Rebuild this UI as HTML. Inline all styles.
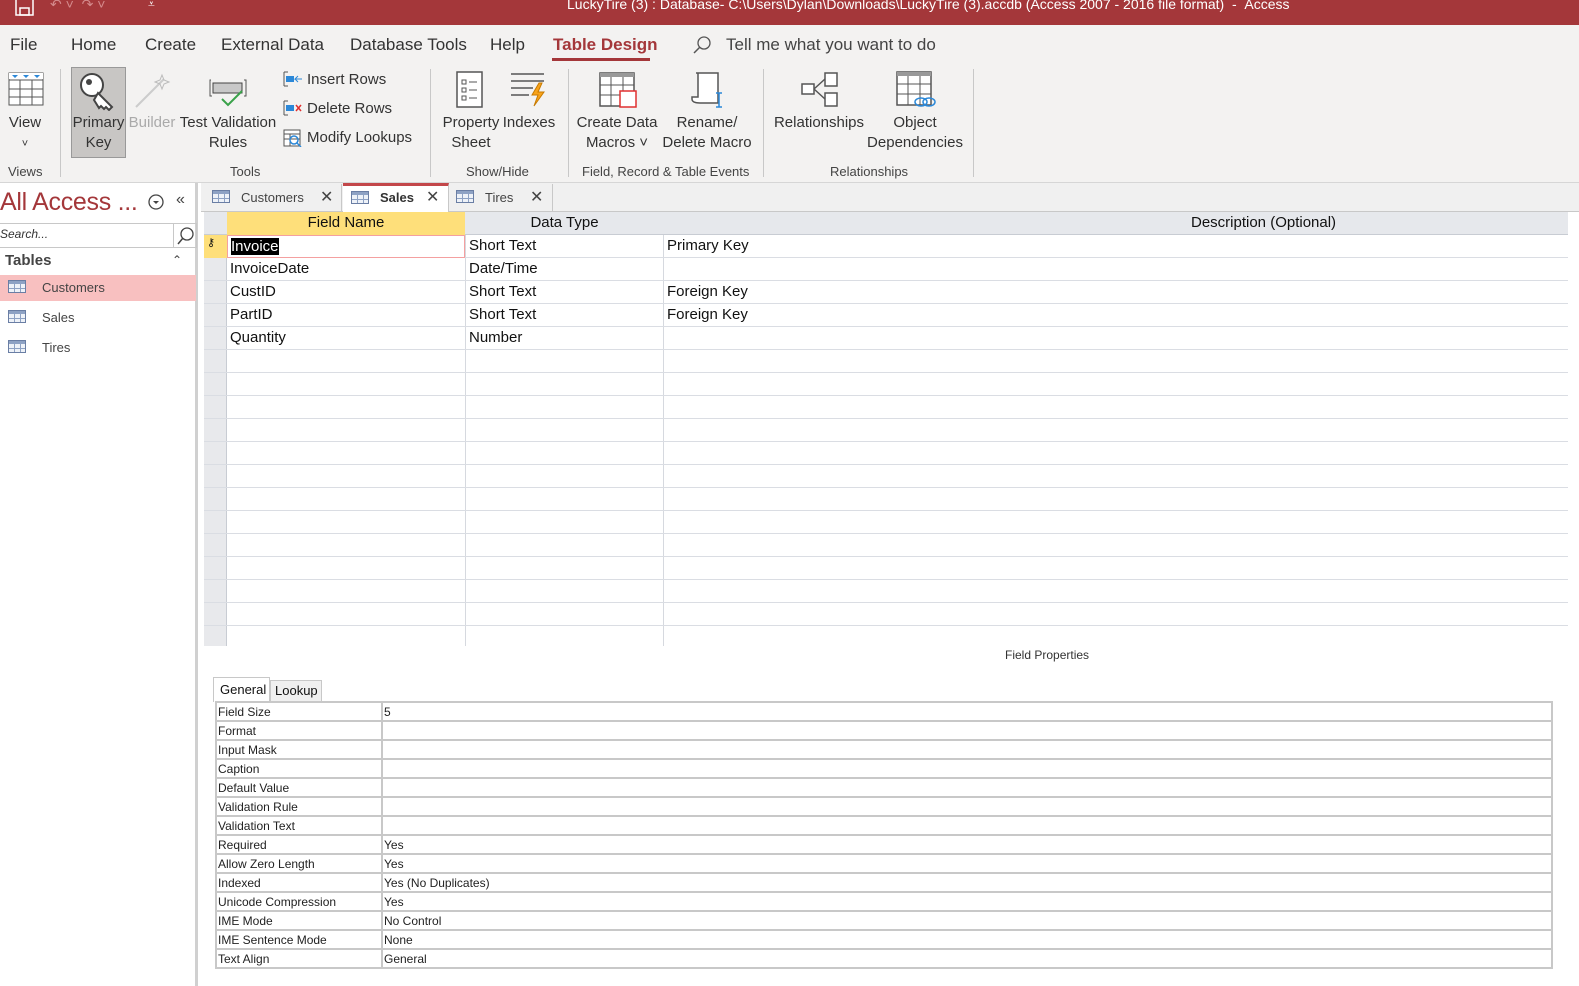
<!DOCTYPE html>
<html><head><meta charset="utf-8"><style>
*{box-sizing:border-box;margin:0;padding:0}
body{width:1579px;height:986px;overflow:hidden;background:#fff;font-family:"Segoe UI","Liberation Sans",sans-serif;position:relative;color:#333}
.abs{position:absolute}
#title{left:0;top:0;width:1579px;height:25px;background:#a4373a;color:#fff;font-size:14px}
#tabs{left:0;top:25px;width:1579px;height:38px;background:#f3f2f1;font-size:17px;color:#333}
#tabs span{position:absolute;top:10px}
#ribbon{left:0;top:63px;width:1579px;height:120px;background:#f3f2f1;border-bottom:1px solid #d6d6d6;font-size:15px;color:#333}
.lbl{position:absolute;text-align:center;line-height:20px}
.grp{position:absolute;top:101px;font-size:13px;color:#444}
.sep{position:absolute;top:6px;width:1px;height:108px;background:#c8c8c8}
#nav{left:0;top:183px;width:198px;height:803px;background:#fff;border-right:3px solid #d0d0d0}
.tabl{position:absolute;font-size:13px;color:#444}
.gicon{display:inline-block;width:18px;height:13px;border:1px solid #6a7ea4;background:linear-gradient(#8ea2c4 0 3px,#eef2f8 3px);background-size:100% 100%;position:absolute}
.gicon::after{content:"";position:absolute;inset:3px 0 0 0;background:linear-gradient(90deg,transparent 5px,#8ea2c4 5px 6px,transparent 6px 11px,#8ea2c4 11px 12px,transparent 12px),linear-gradient(transparent 4px,#8ea2c4 4px 5px,transparent 5px)}
#grid{left:204px;top:212px;width:1364px;height:434px;font-size:15px;color:#111}
.row{position:absolute;left:0;width:1364px;height:23px;border-bottom:1px solid #dadde3}
.cell{position:absolute;top:0;height:23px;line-height:22px;padding-left:3px}
#props td{border:2px solid #c8c8c8;font-size:12px;height:19px;padding:0 1px;color:#222;line-height:14px}
</style></head><body>
<div id="title" class="abs">
<svg class="abs" style="left:14px;top:0" width="22" height="18"><rect x="2" y="-2" width="17" height="17" fill="none" stroke="#fff" stroke-width="1.5"/><rect x="6" y="8" width="9" height="7" fill="none" stroke="#fff" stroke-width="1.5"/></svg>
<span class="abs" style="left:50px;top:-4px;color:#d48a8c">↶ ˅ &nbsp;↷ ˅</span>
<span class="abs" style="left:148px;top:-3px;font-size:12px">⩡</span>
<span class="abs" style="left:567px;top:-4px">LuckyTire (3) : Database- C:\Users\Dylan\Downloads\LuckyTire (3).accdb (Access 2007 - 2016 file format)&nbsp; - &nbsp;Access</span>
</div>
<div id="tabs" class="abs">
<span style="left:10px">File</span><span style="left:71px">Home</span><span style="left:145px">Create</span><span style="left:221px">External Data</span><span style="left:350px">Database Tools</span><span style="left:490px">Help</span>
<span style="left:553px;color:#a4373a;font-weight:bold">Table Design</span>
<div class="abs" style="left:552px;top:33px;width:98px;height:3px;background:#a4373a"></div>
<svg class="abs" style="left:692px;top:10px" width="20" height="20"><circle cx="12" cy="8" r="6" fill="none" stroke="#555" stroke-width="1.3"/><line x1="8" y1="12" x2="2" y2="18" stroke="#555" stroke-width="1.5"/></svg>
<span style="left:726px;color:#444">Tell me what you want to do</span>
</div>
<div id="ribbon" class="abs">
<svg class="abs" style="left:8px;top:8px" width="36" height="36"><rect x="1" y="2" width="34" height="32" fill="#fff" stroke="#555"/><rect x="1" y="2" width="34" height="6" fill="#fff"/><path d="M4 4h6l-3 3zM15 4h6l-3 3zM26 4h6l-3 3z" fill="#2b88d8"/><path d="M1 9h34M1 18h34M1 26h34M12 9v25M24 9v25" stroke="#555"/></svg>
<div class="lbl" style="left:0;top:50px;width:50px">View<br><span style="font-size:11px">˅</span></div>
<div class="grp" style="left:8px">Views</div>
<div class="sep" style="left:60px"></div>
<div class="abs" style="left:71px;top:4px;width:55px;height:91px;background:#c8c6c4;border:1px solid #999"></div>
<svg class="abs" style="left:78px;top:8px" width="40" height="40"><circle cx="14" cy="14" r="11" fill="#fff" stroke="#444" stroke-width="2"/><circle cx="11" cy="11" r="3" fill="#444"/><path d="M20 22l14 14l-3 3l-3-3l-2 2l-3-3l-2 2l-5-8z" fill="#fff" stroke="#444" stroke-width="2"/></svg>
<div class="lbl" style="left:71px;top:50px;width:55px">Primary<br>Key</div>
<svg class="abs" style="left:134px;top:10px" width="40" height="36"><path d="M2 34l28-28" stroke="#ccc" stroke-width="2"/><path d="M28 2l2 5 5 2-5 2-2 5-2-5-5-2 5-2z" fill="none" stroke="#bbb"/></svg>
<div class="lbl" style="left:126px;top:50px;width:52px;color:#aaa">Builder</div>
<svg class="abs" style="left:208px;top:14px" width="42" height="32"><path d="M3 3h-1v16h2M36 3h2v16h-2" stroke="#555" fill="none"/><rect x="5" y="6" width="29" height="10" fill="#c8c8c8" stroke="#444"/><path d="M14 22l6 6 14-14" stroke="#3aa24a" stroke-width="2" fill="none"/></svg>
<div class="lbl" style="left:178px;top:50px;width:100px">Test Validation<br>Rules</div>
<svg class="abs" style="left:283px;top:8px" width="20" height="16"><path d="M1 1h4M1 15h4M1 1v14" stroke="#555" fill="none"/><rect x="3" y="5" width="8" height="6" fill="#2b88d8"/><path d="M19 8h-7l3-3M12 8l3 3" stroke="#2b88d8" fill="none"/></svg>
<div class="abs" style="left:307px;top:8px">Insert Rows</div>
<svg class="abs" style="left:283px;top:37px" width="20" height="16"><path d="M1 1h4M1 15h4M1 1v14" stroke="#555" fill="none"/><rect x="3" y="5" width="8" height="6" fill="#2b88d8"/><path d="M13 5l5 6M18 5l-5 6" stroke="#e03030" stroke-width="1.5"/></svg>
<div class="abs" style="left:307px;top:37px">Delete Rows</div>
<svg class="abs" style="left:283px;top:66px" width="20" height="18"><rect x="1" y="1" width="16" height="16" fill="#fff" stroke="#555"/><path d="M1 5h16M1 10h16M7 5v12" stroke="#555"/><circle cx="11" cy="11" r="4" fill="none" stroke="#2b88d8" stroke-width="1.5"/><path d="M14 14l4 4" stroke="#2b88d8" stroke-width="1.5"/></svg>
<div class="abs" style="left:307px;top:66px">Modify Lookups</div>
<div class="grp" style="left:230px">Tools</div>
<div class="sep" style="left:430px"></div>
<svg class="abs" style="left:456px;top:8px" width="28" height="38"><rect x="1" y="1" width="25" height="35" fill="#fff" stroke="#555" stroke-width="1.5"/><path d="M6 9h4v4h-4zM6 17h4v4h-4zM6 25h4v4h-4zM13 11h8M13 19h8M13 27h8" stroke="#555" fill="none"/></svg>
<div class="lbl" style="left:438px;top:50px;width:66px">Property<br>Sheet</div>
<svg class="abs" style="left:509px;top:8px" width="40" height="38"><path d="M2 3h33M2 10h33M2 17h22M2 24h18" stroke="#555" stroke-width="1.5"/><path d="M30 12l-7 12h6l-4 11 10-14h-6l4-9z" fill="#f8a31a" stroke="#c77a00"/></svg>
<div class="lbl" style="left:502px;top:50px;width:54px">Indexes</div>
<div class="grp" style="left:466px">Show/Hide</div>
<div class="sep" style="left:568px"></div>
<svg class="abs" style="left:599px;top:9px" width="42" height="36"><rect x="1" y="1" width="34" height="33" fill="#fff" stroke="#555" stroke-width="1.5"/><rect x="1" y="1" width="34" height="4" fill="#999"/><path d="M1 13h34M1 23h34M12 5v29M24 5v29" stroke="#555"/><rect x="21" y="19" width="16" height="16" fill="#fff" stroke="#e03030" stroke-width="1.5"/></svg>
<div class="lbl" style="left:572px;top:50px;width:90px">Create Data<br>Macros ˅</div>
<svg class="abs" style="left:688px;top:8px" width="40" height="38"><path d="M8 2h22v30h-16c-4 0-10 0-10-4v-2h6v-24z" fill="#fff" stroke="#555" stroke-width="1.5"/><path d="M31 22v14M28 22h6M28 36h6" stroke="#2b88d8" stroke-width="1.5"/></svg>
<div class="lbl" style="left:660px;top:50px;width:94px">Rename/<br>Delete Macro</div>
<div class="grp" style="left:582px">Field, Record &amp; Table Events</div>
<div class="sep" style="left:763px"></div>
<svg class="abs" style="left:801px;top:9px" width="38" height="36"><rect x="1" y="12" width="12" height="10" fill="#fff" stroke="#555" stroke-width="1.5"/><rect x="24" y="1" width="12" height="13" fill="#fff" stroke="#555" stroke-width="1.5"/><rect x="24" y="21" width="12" height="13" fill="#fff" stroke="#555" stroke-width="1.5"/><path d="M13 17l11-10M13 17l11 10" stroke="#555" stroke-width="1.5"/></svg>
<div class="lbl" style="left:770px;top:50px;width:98px">Relationships</div>
<svg class="abs" style="left:896px;top:8px" width="40" height="38"><rect x="1" y="1" width="34" height="33" fill="#fff" stroke="#555" stroke-width="1.5"/><rect x="1" y="1" width="34" height="4" fill="#999"/><path d="M1 13h34M1 23h34M12 5v29M24 5v29" stroke="#555"/><ellipse cx="25" cy="31" rx="6" ry="4" fill="none" stroke="#2b88d8" stroke-width="1.5"/><ellipse cx="33" cy="31" rx="6" ry="4" fill="none" stroke="#2b88d8" stroke-width="1.5"/></svg>
<div class="lbl" style="left:862px;top:50px;width:106px">Object<br>Dependencies</div>
<div class="grp" style="left:830px">Relationships</div>
<div class="sep" style="left:973px"></div>
</div>
<div id="nav" class="abs">
<div class="abs" style="left:0;top:5px;font-size:25px;color:#a4373a;letter-spacing:-0.3px">All Access ...</div>
<svg class="abs" style="left:148px;top:11px" width="16" height="16"><circle cx="8" cy="8" r="7" fill="none" stroke="#444" stroke-width="1.3"/><path d="M5 7h6l-3 3z" fill="#444"/></svg>
<div class="abs" style="left:176px;top:8px;font-size:16px;color:#444">«</div>
<div class="abs" style="left:0;top:40px;width:197px;height:25px;border:1px solid #c8c8c8;border-left:none"><span class="abs" style="left:0;top:3px;font-size:12px;font-style:italic;color:#333">Search...</span><div class="abs" style="left:173px;top:0;width:1px;height:24px;background:#c8c8c8"></div><svg class="abs" style="left:175px;top:1px" width="22" height="22"><circle cx="12" cy="9" r="6" fill="none" stroke="#444" stroke-width="1.3"/><path d="M8 13l-5 6" stroke="#444" stroke-width="1.5"/></svg></div>
<div class="abs" style="left:5px;top:69px;font-size:15px;font-weight:bold;color:#444">Tables</div>
<div class="abs" style="left:172px;top:70px;font-size:12px;color:#444">⌃</div>
<div class="abs" style="left:0;top:92px;width:196px;height:26px;background:#f8c0c0"></div>
<span class="gicon" style="left:8px;top:97px"></span><div class="tabl" style="left:42px;top:97px">Customers</div>
<span class="gicon" style="left:8px;top:127px"></span><div class="tabl" style="left:42px;top:127px">Sales</div>
<span class="gicon" style="left:8px;top:157px"></span><div class="tabl" style="left:42px;top:157px">Tires</div>
</div>
<div class="abs" style="left:201px;top:183px;width:1378px;height:29px;background:#f0f0f0;border-bottom:1px solid #c8c8c8"></div>
<div class="abs" style="left:204px;top:184px;width:138px;height:28px;border-right:1px solid #c8c8c8"><span class="gicon" style="left:8px;top:6px"></span><span class="tabl" style="left:37px;top:6px">Customers</span><span class="tabl" style="left:116px;top:3px;font-size:16px">✕</span></div>
<div class="abs" style="left:343px;top:183px;width:106px;height:30px;background:#fff;border-top:3px solid #c3474a;border-right:1px solid #c8c8c8"><span class="gicon" style="left:8px;top:5px"></span><span class="tabl" style="left:37px;top:4px;font-weight:bold;color:#333">Sales</span><span class="tabl" style="left:83px;top:1px;font-size:16px">✕</span></div>
<div class="abs" style="left:450px;top:184px;width:103px;height:28px;border-right:1px solid #c8c8c8"><span class="gicon" style="left:6px;top:6px"></span><span class="tabl" style="left:35px;top:6px">Tires</span><span class="tabl" style="left:80px;top:3px;font-size:16px">✕</span></div>
<div id="grid" class="abs">
<div class="abs" style="left:0;top:0;width:23px;height:434px;background:#e8e9ec;border-right:1px solid #c8ccd3"></div>
<div class="abs" style="left:261px;top:0;width:1px;height:434px;background:#d6d9df"></div>
<div class="abs" style="left:459px;top:0;width:1px;height:434px;background:#d6d9df"></div>
<div class="row" style="top:0;background:#e6e8ec;border-bottom:1px solid #c8ccd3"><div class="cell" style="left:23px;width:238px;background:#fedf7a;text-align:center;padding:0">Field Name</div><div class="cell" style="left:262px;width:197px;text-align:center;padding:0">Data Type</div><div class="cell" style="left:987px;padding:0">Description (Optional)</div></div>
<div class="row" style="top:23px"><div class="abs" style="left:0;top:0;width:23px;height:23px;background:#fedf7a"></div><span class="abs" style="left:3px;top:1px;font-size:11px">⚷</span><div class="cell" style="left:23px;width:238px;border:1px solid #f4a0a0"><span style="background:#000;color:#fff">Invoice</span></div><div class="cell" style="left:262px">Short Text</div><div class="cell" style="left:460px">Primary Key</div></div>
<div class="row" style="top:46px"><div class="cell" style="left:23px">InvoiceDate</div><div class="cell" style="left:262px">Date/Time</div></div>
<div class="row" style="top:69px"><div class="cell" style="left:23px">CustID</div><div class="cell" style="left:262px">Short Text</div><div class="cell" style="left:460px">Foreign Key</div></div>
<div class="row" style="top:92px"><div class="cell" style="left:23px">PartID</div><div class="cell" style="left:262px">Short Text</div><div class="cell" style="left:460px">Foreign Key</div></div>
<div class="row" style="top:115px"><div class="cell" style="left:23px">Quantity</div><div class="cell" style="left:262px">Number</div></div>
<div class="row" style="top:138px"></div><div class="row" style="top:161px"></div><div class="row" style="top:184px"></div><div class="row" style="top:207px"></div><div class="row" style="top:230px"></div><div class="row" style="top:253px"></div><div class="row" style="top:276px"></div><div class="row" style="top:299px"></div><div class="row" style="top:322px"></div><div class="row" style="top:345px"></div><div class="row" style="top:368px"></div><div class="row" style="top:391px"></div>
</div>
<div class="abs" style="left:1005px;top:648px;font-size:12px;color:#333">Field Properties</div>
<div class="abs" style="left:213px;top:677px;width:57px;height:25px;background:#fff;border:1px solid #c8c8c8;border-bottom:none;font-size:13px;padding:4px 6px;color:#111">General</div>
<div class="abs" style="left:270px;top:680px;width:52px;height:22px;background:#f0f0f0;border:1px solid #c8c8c8;font-size:13px;padding:2px 4px;color:#111">Lookup</div>
<table id="props" class="abs" style="left:215px;top:701px;width:1338px;border-collapse:collapse">
<tr><td style="width:166px">Field Size</td><td>5</td></tr>
<tr><td>Format</td><td></td></tr>
<tr><td>Input Mask</td><td></td></tr>
<tr><td>Caption</td><td></td></tr>
<tr><td>Default Value</td><td></td></tr>
<tr><td>Validation Rule</td><td></td></tr>
<tr><td>Validation Text</td><td></td></tr>
<tr><td>Required</td><td>Yes</td></tr>
<tr><td>Allow Zero Length</td><td>Yes</td></tr>
<tr><td>Indexed</td><td>Yes (No Duplicates)</td></tr>
<tr><td>Unicode Compression</td><td>Yes</td></tr>
<tr><td>IME Mode</td><td>No Control</td></tr>
<tr><td>IME Sentence Mode</td><td>None</td></tr>
<tr><td>Text Align</td><td>General</td></tr>
</table>
</body></html>
